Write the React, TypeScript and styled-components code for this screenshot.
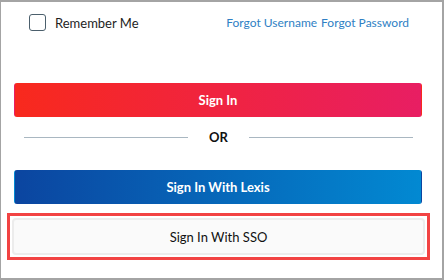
import React from 'react';
import styled, { createGlobalStyle } from 'styled-components';

const GlobalStyle = createGlobalStyle`
  html, body {
    margin: 0;
    padding: 0;
    background: #ffffff;
  }
  body {
    font-family: Lato, "Liberation Sans", sans-serif;
  }
`;

const App: React.FC = () => {
  return (
    <>
      <GlobalStyle />
      <Frame>
        <TopRow>
          <RememberLabel>
            <CheckBox type="checkbox" />
            Remember Me
          </RememberLabel>
          <Links>
            <TextLink href="#">Forgot Username</TextLink>
            <TextLink href="#">Forgot Password</TextLink>
          </Links>
        </TopRow>
        <PrimaryButton $from="#f8291d" $to="#e81e63">
          Sign In
        </PrimaryButton>
        <Divider>
          <Line />
          <DividerText>OR</DividerText>
          <Line />
        </Divider>
        <PrimaryButton $from="#0b45a0" $to="#0289d2">
          Sign In With Lexis
        </PrimaryButton>
        <Highlight>
          <SecondaryButton>Sign In With SSO</SecondaryButton>
        </Highlight>
      </Frame>
    </>
  );
};

const Frame = styled.div`
  width: 444px;
  height: 280px;
  box-sizing: border-box;
  border-style: solid;
  border-color: #a4a4a4;
  border-width: 2px 2px 2px 1px;
  padding: 0 12px 0 6px;
  display: flex;
  flex-direction: column;
`;

const TopRow = styled.div`
  display: flex;
  align-items: center;
  justify-content: space-between;
  height: 41px;
  padding: 0 21px 0 22px;
  margin-bottom: 40px;
`;

const RememberLabel = styled.label`
  display: flex;
  align-items: center;
  gap: 9px;
  font-size: 13px;
  color: #1e1e1e;
`;

const CheckBox = styled.input`
  appearance: none;
  margin: 0;
  width: 17px;
  height: 17px;
  box-sizing: border-box;
  border: 1.5px solid #4b5f6c;
  border-radius: 3px;
  background: #ffffff;
`;

const Links = styled.div`
  display: flex;
  gap: 4px;
`;

const TextLink = styled.a`
  font-size: 12px;
  color: #2f7fc4;
  text-decoration: none;
`;

const PrimaryButton = styled.button<{ $from: string; $to: string }>`
  margin: 0 8px 0 7px;
  height: 34px;
  border: 1px solid transparent;
  border-radius: 3px;
  background: linear-gradient(90deg, ${(p) => p.$from}, ${(p) => p.$to});
  color: #ffffff;
  font-family: Lato, "Liberation Sans", sans-serif;
  font-weight: 700;
  font-size: 13px;
`;

const Divider = styled.div`
  display: flex;
  align-items: center;
  height: 42px;
  margin: -1px 17px 12px;
  gap: 21px;
`;

const Line = styled.div`
  flex: 1;
  height: 1px;
  background: #a9b7c1;
`;

const DividerText = styled.span`
  font-size: 13px;
  font-weight: 700;
  color: #111111;
`;

const Highlight = styled.div`
  margin-top: 9px;
  border: 3px solid #f24343;
  padding: 2px;
`;

const SecondaryButton = styled.button`
  width: 100%;
  height: 37px;
  display: block;
  box-sizing: border-box;
  border: 2px solid #ececec;
  border-radius: 4px;
  background: #fafafa;
  color: #111111;
  font-family: Lato, "Liberation Sans", sans-serif;
  font-size: 13px;
`;

export default App;
